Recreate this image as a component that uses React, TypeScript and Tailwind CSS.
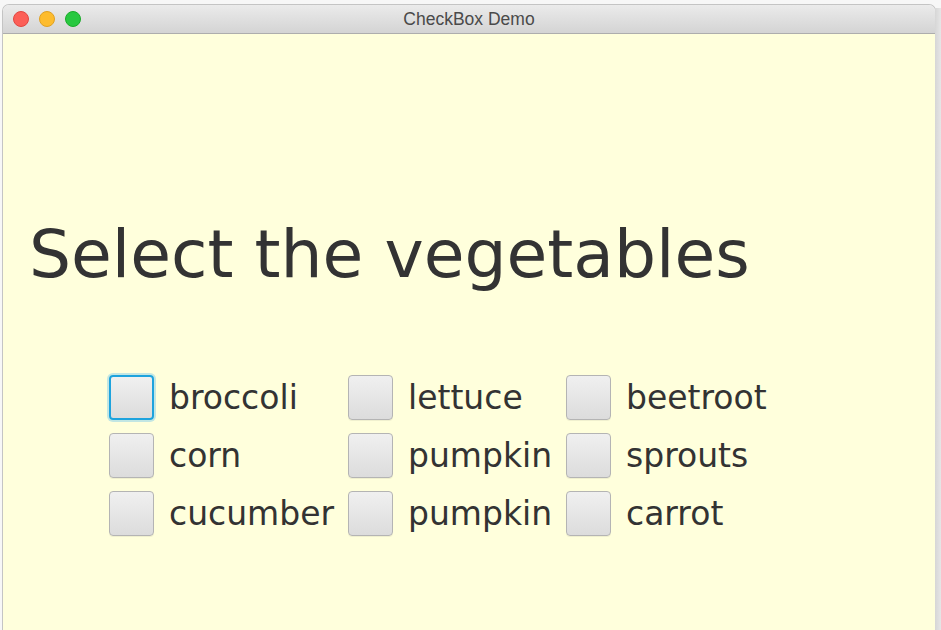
import React from "react";

const items: { label: string; focused?: boolean }[][] = [
  [{ label: "broccoli", focused: true }, { label: "lettuce" }, { label: "beetroot" }],
  [{ label: "corn" }, { label: "pumpkin" }, { label: "sprouts" }],
  [{ label: "cucumber" }, { label: "pumpkin" }, { label: "carrot" }],
];

function Box({ focused }: { focused?: boolean }) {
  return (
    <div
      className={
        "w-[45px] h-[45px] shrink-0 rounded-[4px] bg-gradient-to-b from-[#f0f0f0] to-[#dcdcdc] " +
        (focused
          ? "border-2 border-[#1ea3dd] shadow-[0_0_0_2px_rgba(120,200,235,0.45)]"
          : "border border-[#b4b4b4] shadow-[0_1px_0_rgba(0,0,0,0.06)]")
      }
    />
  );
}

export default function App() {
  return (
    <div className="w-[941px] h-[630px] bg-[#f7f7f7] relative overflow-hidden" style={{ fontFamily: '"DejaVu Sans", Verdana, sans-serif' }}>
      <div className="absolute right-0 top-[8px] w-[6px] h-[622px] bg-gradient-to-r from-[#d6d6d6] to-[#e6e6e6]" />
      <div className="ml-[2px] mt-[4px] w-[934px] h-[626px] flex flex-col rounded-t-[7px] border border-b-0 border-[#c4c4c4] overflow-hidden">
        <div className="h-[29px] shrink-0 bg-gradient-to-b from-[#ebebeb] to-[#d4d4d4] border-b border-[#adadad] flex items-center relative">
          <div className="flex items-center gap-[10px] pl-[10px] relative z-10">
            <span className="w-[16px] h-[16px] rounded-full bg-[#fc5f57] border border-[#e14640]" />
            <span className="w-[16px] h-[16px] rounded-full bg-[#fdbc2e] border border-[#dfa023]" />
            <span className="w-[16px] h-[16px] rounded-full bg-[#28c840] border border-[#1aab29]" />
          </div>
          <div
            className="absolute inset-0 flex items-center justify-center text-[17.5px] text-[#4a4a4a]"
            style={{ fontFamily: '"Liberation Sans", Arial, sans-serif' }}
          >
            CheckBox Demo
          </div>
        </div>
        <div className="flex-1 bg-[#ffffdc] text-[#333333]">
          <div className="pt-[187px] pl-[26px] text-[66.3px] leading-none whitespace-nowrap">Select the vegetables</div>
          <div className="mt-[88px] ml-[106px] grid grid-cols-[239px_218px_auto] gap-y-[13px]">
            {items.flat().map((it, i) => (
              <div key={i} className="flex items-center gap-[15px]">
                <Box focused={it.focused} />
                <span className="text-[33px] leading-[45px] whitespace-nowrap">{it.label}</span>
              </div>
            ))}
          </div>
        </div>
      </div>
    </div>
  );
}
